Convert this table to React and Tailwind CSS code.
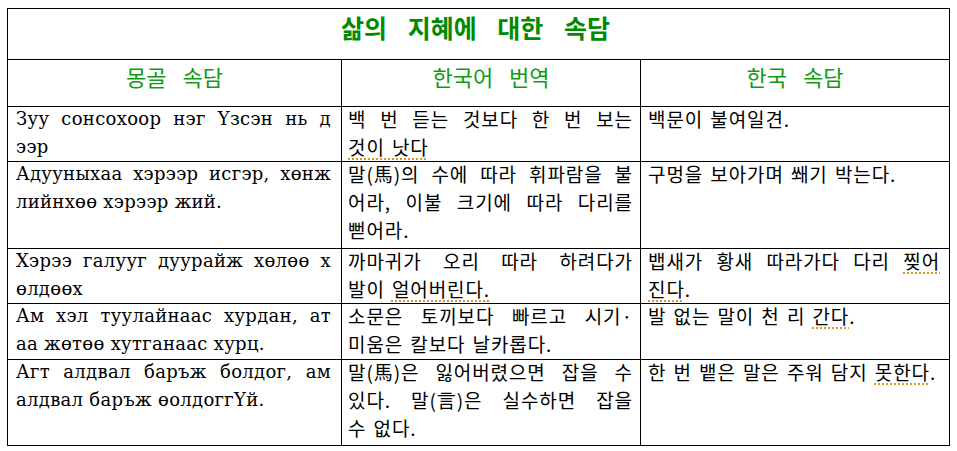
import React from "react";

const S = ({ children }) => (
    <span className="underline decoration-dotted decoration-[#d9962b] decoration-2 underline-offset-[3px]">{children}</span>
);

// keeps justify from spreading the letters round the hanja
const H = ({ children }) => <span className="inline-block">({children})</span>;

const rows = [
    {
        h: "h-[55px]",
        cells: [
            ["Зуу сонсохоор нэг Үзсэн нь д", "ээр"],
            ["백 번 듣는 것보다 한 번 보는", <S>것이 낫다</S>],
            ["백문이 불여일견."],
        ],
    },
    {
        h: "h-[87px]",
        cells: [
            ["Адууныхаа хэрээр исгэр, хөнж", "лийнхөө хэрээр жий."],
            [<>말<H>馬</H>의 수에 따라 휘파람을 불</>, "어라, 이불 크기에 따라 다리를", "뻗어라."],
            ["구멍을 보아가며 쐐기 박는다."],
        ],
    },
    {
        h: "h-[53px]",
        cells: [
            ["Хэрээ галууг дуурайж хөлөө х", "өлдөөх"],
            ["까마귀가 오리 따라 하려다가", <>발이 <S>얼어버린다.</S></>],
            [<>뱁새가 황새 따라가다 다리 <S>찢어</S></>, <><S>진다</S>.</>],
        ],
    },
    {
        h: "h-[56px]",
        cells: [
            ["Ам хэл туулайнаас хурдан, ат", "аа жөтөө хутганаас хурц."],
            ["소문은 토끼보다 빠르고 시기·", "미움은 칼보다 날카롭다."],
            [<>발 없는 말이 천 리 <S>간다</S>.</>],
        ],
    },
    {
        h: "h-[86px]",
        cells: [
            ["Агт алдвал баръж болдог, ам", "алдвал баръж өолдоггҮй."],
            [<>말<H>馬</H>은 잃어버렸으면 잡을 수</>, <>있다. 말<H>言</H>은 실수하면 잡을</>, "수 없다."],
            [<>한 번 뱉은 말은 주워 담지 <S>못한다</S>.</>],
        ],
    },
];

const cellPad = ["pl-[8px] pr-[10px]", "pl-[6px] pr-[7px]", "pl-[7px] pr-[9px]"];
const korean = "font-['Noto_Sans_CJK_KR',sans-serif] text-[19px] tracking-[0.9px] [word-spacing:2px]";
const cellFont = ["font-['DejaVu_Serif',serif] text-[18px] tracking-[0.3px]", korean, korean];

function Lines({ lines }) {
    return (
        <div className="-mt-[2px] leading-[28px]">
            {lines.map((line, i) => (
                <div
                    key={i}
                    className={
                        i < lines.length - 1
                            ? "text-justify [text-align-last:justify]"
                            : "text-left whitespace-nowrap"
                    }
                >
                    {line}
                </div>
            ))}
        </div>
    );
}

export default function App() {
    return (
        <div className="w-[957px] h-[451px] bg-white text-black">
            <table className="table-fixed border-collapse w-[942px] ml-[7px] mt-[8px]">
                <colgroup>
                    <col className="w-[334px]" />
                    <col className="w-[299px]" />
                    <col className="w-[309px]" />
                </colgroup>
                <tbody>
                    <tr className="h-[51px]">
                        <td colSpan={3} className="border border-black align-top text-center pt-[2px]">
                            <div className="font-['Noto_Sans_CJK_KR',sans-serif] font-bold text-[25px] leading-[32px] text-[#008a00] [word-spacing:15px] pr-[6px]">
                                삶의 지혜에 대한 속담
                            </div>
                        </td>
                    </tr>
                    <tr className="h-[47px]">
                        {["몽골 속담", "한국어 번역", "한국 속담"].map((t) => (
                            <td key={t} className="border border-black align-top text-center pt-[2px]">
                                <div className="font-['Noto_Sans_CJK_KR',sans-serif] text-[22px] leading-[28px] text-[#129a12] [word-spacing:11px]">
                                    {t}
                                </div>
                            </td>
                        ))}
                    </tr>
                    {rows.map((row, r) => (
                        <tr key={r} className={row.h}>
                            {row.cells.map((lines, c) => (
                                <td key={c} className={`border border-black align-top p-0 ${cellPad[c]} ${cellFont[c]}`}>
                                    <Lines lines={lines} />
                                </td>
                            ))}
                        </tr>
                    ))}
                </tbody>
            </table>
        </div>
    );
}
